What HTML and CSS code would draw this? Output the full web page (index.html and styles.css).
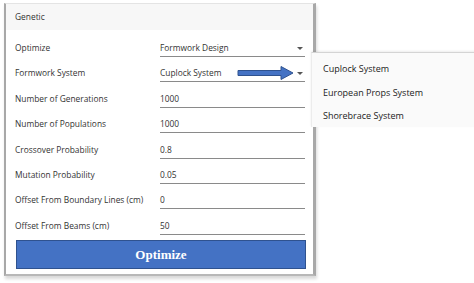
FILE: index.html
```html
<!DOCTYPE html>
<html lang="en">
<head>
    <meta charset="UTF-8">
    <meta name="viewport" content="width=device-width, initial-scale=1.0">
    <title>Genetic</title>
    <link rel="stylesheet" href="styles.css">
</head>
<body>
    <div class="panel">
        <div class="panel-header">Genetic</div>
        <div class="panel-body">
            <div class="row">
                <span class="label">Optimize</span>
                <span class="field select">Formwork Design<span class="caret"></span></span>
            </div>
            <div class="row">
                <span class="label">Formwork System</span>
                <span class="field select">Cuplock System<span class="caret"></span></span>
            </div>
            <div class="row">
                <span class="label">Number of Generations</span>
                <span class="field">1000</span>
            </div>
            <div class="row">
                <span class="label">Number of Populations</span>
                <span class="field">1000</span>
            </div>
            <div class="row">
                <span class="label">Crossover Probability</span>
                <span class="field">0.8</span>
            </div>
            <div class="row">
                <span class="label">Mutation Probability</span>
                <span class="field">0.05</span>
            </div>
            <div class="row">
                <span class="label">Offset From Boundary Lines (cm)</span>
                <span class="field">0</span>
            </div>
            <div class="row">
                <span class="label">Offset From Beams (cm)</span>
                <span class="field">50</span>
            </div>
            <button type="button" class="optimize-btn">Optimize</button>
        </div>
    </div>

    <!-- annotation arrow pointing to the open dropdown -->
    <svg class="pointer-arrow" width="58" height="16" viewBox="0 0 58 16">
        <path d="M1 5.5 H44 V1.5 L56 8 L44 14.5 V10.5 H1 Z" fill="#4472c4" stroke="#2f528f" stroke-width="1"/>
    </svg>

    <ul class="dropdown">
        <li>Cuplock System</li>
        <li>European Props System</li>
        <li>Shorebrace System</li>
    </ul>
</body>
</html>
```

FILE: styles.css
```css
body {
    font-family: "Open Sans", "Noto Sans", sans-serif;
    font-size: 8.4px;
    color: #333;
    margin: 0;
    padding: 0;
    background-color: #fff;
    position: relative;
    width: 474px;
    height: 283px;
    overflow: hidden;
}

.panel {
    margin: 3px 0 0 4px;
    width: 307px;
    border-top: 1px solid #e4e4e4;
    border-left: 2px solid #a8a8a8;
    border-right: 3px solid #a8a8a8;
    border-bottom: 2px solid #b8b8b8;
    box-shadow: 1px 3px 3px rgba(0, 0, 0, 0.15);
    background-color: #fff;
}

.panel-header {
    height: 26px;
    line-height: 26px;
    padding-left: 9px;
    background-color: #f7f7f7;
    color: #333;
}

.panel-body {
    padding: 6px 7px 5px 9px;
}

.row {
    display: flex;
    height: 25.4px;
    padding-top: 4px;
    box-sizing: border-box;
}

.label {
    width: 145px;
    line-height: 16px;
}

.field {
    width: 145px;
    height: 16px;
    line-height: 16px;
    border-bottom: 1px solid #8a8a8a;
    position: relative;
    color: #333;
}

.caret {
    position: absolute;
    right: 2px;
    top: 7px;
    width: 0;
    height: 0;
    border-left: 3px solid transparent;
    border-right: 3px solid transparent;
    border-top: 3px solid #555;
}

.optimize-btn {
    display: block;
    width: 290px;
    height: 29px;
    margin: 1px 0 0 1px;
    padding: 0;
    background-color: #4472c4;
    border: 1px solid #2f528f;
    color: #fff;
    font-family: "Liberation Serif", serif;
    font-weight: bold;
    font-size: 13px;
}

.pointer-arrow {
    position: absolute;
    left: 237px;
    top: 65px;
}

.dropdown {
    position: absolute;
    left: 311px;
    top: 52px;
    width: 170px;
    height: 75px;
    margin: 0;
    padding: 4px 0 0 0;
    box-sizing: border-box;
    list-style: none;
    font-size: 9px;
    background-color: #fafafa;
    border-top: 1px solid #d4d4d4;
    border-left: 1px solid #ececec;
    box-shadow: 0 -1px 2px rgba(0, 0, 0, 0.08);
}

.dropdown li {
    height: 23.5px;
    line-height: 23.5px;
    padding-left: 11px;
    color: #222;
}
```
